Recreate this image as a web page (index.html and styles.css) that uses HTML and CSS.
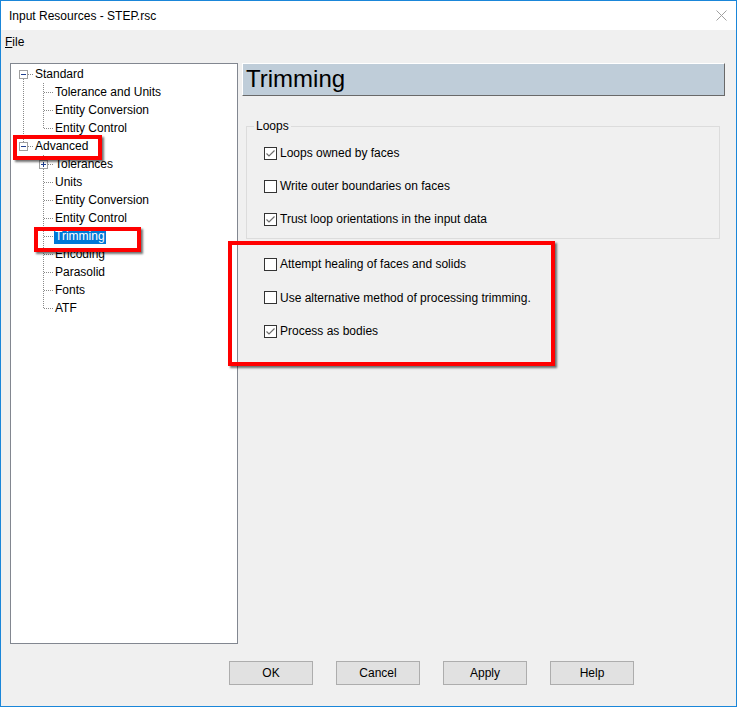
FILE: index.html
```html
<!DOCTYPE html>
<html>
<head>
<meta charset="utf-8">
<link rel="stylesheet" href="styles.css">
</head>
<body>
<div class="window">
  <div class="titlebar">
    <span class="title">Input Resources - STEP.rsc</span>
    <svg class="close" width="11" height="11" viewBox="0 0 11 11"><path d="M0.5 0.5 L10.5 10.5 M10.5 0.5 L0.5 10.5" stroke="#a0a0a0" stroke-width="1" fill="none"/></svg>
  </div>
  <div class="menubar"><span class="menu-item"><u>F</u>ile</span></div>
  <div class="main">
    <div class="tree">
      <div class="row">
        <svg class="cell" width="20" height="18"><rect x="6.5" y="5.5" width="8" height="8" fill="#fff" stroke="#a0a0a0"/><path d="M8 9.5 H13" stroke="#1f3f8f"/><path class="dot" d="M15 9.5 H20 M10.5 14 V18"/></svg>
        <span class="label">Standard</span>
      </div>
      <div class="row">
        <svg class="cell" width="20" height="18"><path class="dot" d="M10.5 0 V18"/></svg>
        <svg class="cell" width="20" height="18"><path class="dot" d="M10.5 0 V18 M11 9.5 H20"/></svg>
        <span class="label">Tolerance and Units</span>
      </div>
      <div class="row">
        <svg class="cell" width="20" height="18"><path class="dot" d="M10.5 0 V18"/></svg>
        <svg class="cell" width="20" height="18"><path class="dot" d="M10.5 0 V18 M11 9.5 H20"/></svg>
        <span class="label">Entity Conversion</span>
      </div>
      <div class="row">
        <svg class="cell" width="20" height="18"><path class="dot" d="M10.5 0 V18"/></svg>
        <svg class="cell" width="20" height="18"><path class="dot" d="M10.5 0 V10 M11 9.5 H20"/></svg>
        <span class="label">Entity Control</span>
      </div>
      <div class="row">
        <svg class="cell" width="20" height="18"><path class="dot" d="M10.5 0 V5 M15 9.5 H20"/><rect x="6.5" y="5.5" width="8" height="8" fill="#fff" stroke="#a0a0a0"/><path d="M8 9.5 H13" stroke="#1f3f8f"/></svg>
        <span class="label">Advanced</span>
      </div>
      <div class="row">
        <svg class="cell" width="20" height="18"></svg>
        <svg class="cell" width="20" height="18"><path class="dot" d="M10.5 0 V5 M10.5 14 V18 M15 9.5 H20"/><rect x="6.5" y="5.5" width="8" height="8" fill="#fff" stroke="#a0a0a0"/><path d="M8 9.5 H13 M10.5 7 V12" stroke="#1f3f8f"/></svg>
        <span class="label">Tolerances</span>
      </div>
      <div class="row">
        <svg class="cell" width="20" height="18"></svg>
        <svg class="cell" width="20" height="18"><path class="dot" d="M10.5 0 V18 M11 9.5 H20"/></svg>
        <span class="label">Units</span>
      </div>
      <div class="row">
        <svg class="cell" width="20" height="18"></svg>
        <svg class="cell" width="20" height="18"><path class="dot" d="M10.5 0 V18 M11 9.5 H20"/></svg>
        <span class="label">Entity Conversion</span>
      </div>
      <div class="row">
        <svg class="cell" width="20" height="18"></svg>
        <svg class="cell" width="20" height="18"><path class="dot" d="M10.5 0 V18 M11 9.5 H20"/></svg>
        <span class="label">Entity Control</span>
      </div>
      <div class="row">
        <svg class="cell" width="20" height="18"></svg>
        <svg class="cell" width="20" height="18"><path class="dot" d="M10.5 0 V18 M11 9.5 H20"/></svg>
        <span class="label selected">Trimming</span>
      </div>
      <div class="row">
        <svg class="cell" width="20" height="18"></svg>
        <svg class="cell" width="20" height="18"><path class="dot" d="M10.5 0 V18 M11 9.5 H20"/></svg>
        <span class="label">Encoding</span>
      </div>
      <div class="row">
        <svg class="cell" width="20" height="18"></svg>
        <svg class="cell" width="20" height="18"><path class="dot" d="M10.5 0 V18 M11 9.5 H20"/></svg>
        <span class="label">Parasolid</span>
      </div>
      <div class="row">
        <svg class="cell" width="20" height="18"></svg>
        <svg class="cell" width="20" height="18"><path class="dot" d="M10.5 0 V18 M11 9.5 H20"/></svg>
        <span class="label">Fonts</span>
      </div>
      <div class="row">
        <svg class="cell" width="20" height="18"></svg>
        <svg class="cell" width="20" height="18"><path class="dot" d="M10.5 0 V10 M11 9.5 H20"/></svg>
        <span class="label">ATF</span>
      </div>
    </div>
    <div class="panel">
      <div class="header">Trimming</div>
      <fieldset class="group">
        <legend>Loops</legend>
        <div class="check-row"><span class="box checked"><svg width="11" height="11" viewBox="0 0 11 11"><path d="M1.5 5.5 L4 8 L9.5 2.5" stroke="#6d6d6d" stroke-width="1.2" fill="none"/></svg></span><span>Loops owned by faces</span></div>
        <div class="check-row"><span class="box"></span><span>Write outer boundaries on faces</span></div>
        <div class="check-row"><span class="box checked"><svg width="11" height="11" viewBox="0 0 11 11"><path d="M1.5 5.5 L4 8 L9.5 2.5" stroke="#6d6d6d" stroke-width="1.2" fill="none"/></svg></span><span>Trust loop orientations in the input data</span></div>
      </fieldset>
      <div class="options">
        <div class="check-row"><span class="box"></span><span>Attempt healing of faces and solids</span></div>
        <div class="check-row"><span class="box"></span><span>Use alternative method of processing trimming.</span></div>
        <div class="check-row"><span class="box checked"><svg width="11" height="11" viewBox="0 0 11 11"><path d="M1.5 5.5 L4 8 L9.5 2.5" stroke="#6d6d6d" stroke-width="1.2" fill="none"/></svg></span><span>Process as bodies</span></div>
      </div>
    </div>
  </div>
  <div class="buttons">
    <button class="btn">OK</button>
    <button class="btn">Cancel</button>
    <button class="btn">Apply</button>
    <button class="btn">Help</button>
  </div>
  <div class="mark mark-advanced"></div>
  <div class="mark mark-trimming"></div>
  <div class="mark mark-options"></div>
</div>
</body>
</html>
```

FILE: styles.css
```css
* { box-sizing: border-box; }
html, body { margin: 0; padding: 0; background: #f0f0f0; }
body {
  font-family: "Liberation Sans", Arial, sans-serif;
  font-size: 12px;
  color: #000;
}
.window {
  position: relative;
  width: 737px;
  height: 707px;
  border: 1px solid #1a86d9;
  background: #f0f0f0;
  display: flex;
  flex-direction: column;
}
.titlebar {
  height: 29px;
  background: #fff;
  display: flex;
  align-items: center;
  justify-content: space-between;
  padding: 0 9px 0 8px;
}
.title { font-size: 12px; }
.close { display: block; }
.menubar {
  height: 23px;
  display: flex;
  align-items: center;
  padding-left: 4px;
}
.menu-item u { text-decoration: underline; }
.main {
  display: flex;
  gap: 4px;
  padding: 10px 11px 0 9px;
}
.tree {
  width: 228px;
  height: 581px;
  background: #fff;
  border: 1px solid #828790;
  padding: 1px 0 0 2px;
}
.row {
  display: flex;
  align-items: center;
  height: 18px;
}
.cell { display: block; flex: none; }
.dot { stroke: #8a8a8a; stroke-width: 1; stroke-dasharray: 1 1; fill: none; }
.label {
  margin-left: 1px;
  padding: 0 1px;
  line-height: 16px;
  white-space: nowrap;
}
.selected { background: #0078d7; color: #fff; }
.panel {
  flex: 1;
  display: flex;
  flex-direction: column;
}
.header {
  height: 33px;
  background: #bfcdd9;
  border-top: 1px solid #fff;
  border-left: 1px solid #fff;
  border-right: 1px solid #696969;
  border-bottom: 1px solid #696969;
  font-size: 24px;
  line-height: 30px;
  padding-left: 3px;
}
.group {
  margin: 23px 5px 0 4px;
  border: 1px solid #dcdcdc;
  padding: 12px 0 11px 17px;
  display: flex;
  flex-direction: column;
  gap: 17px;
}
.group legend {
  padding: 0 2px;
  margin-left: -10px;
  line-height: 14px;
}
.check-row {
  display: flex;
  align-items: center;
  height: 16px;
  gap: 3px;
  white-space: nowrap;
}
.box {
  width: 13px;
  height: 13px;
  border: 1px solid #333;
  background: #fff;
  flex: none;
  display: flex;
  align-items: center;
  justify-content: center;
}
.box svg { display: block; }
.options {
  display: flex;
  flex-direction: column;
  gap: 17.5px;
  padding: 17px 0 0 22px;
}
.buttons {
  display: flex;
  gap: 23px;
  padding: 17px 0 0 228px;
}
.btn {
  width: 84px;
  height: 24px;
  background: #e1e1e1;
  border: 1px solid #adadad;
  font-family: "Liberation Sans", Arial, sans-serif;
  font-size: 12px;
  color: #000;
  padding: 0;
}
.mark {
  position: absolute;
  border: 4px solid #ff0000;
  box-shadow: 2px 2px 2px rgba(0, 0, 0, 0.55);
}
.mark-advanced { left: 12px; top: 134px; width: 89px; height: 25px; }
.mark-trimming { left: 33px; top: 226px; width: 107px; height: 25px; }
.mark-options { left: 227px; top: 240px; width: 327px; height: 125px; }
```
